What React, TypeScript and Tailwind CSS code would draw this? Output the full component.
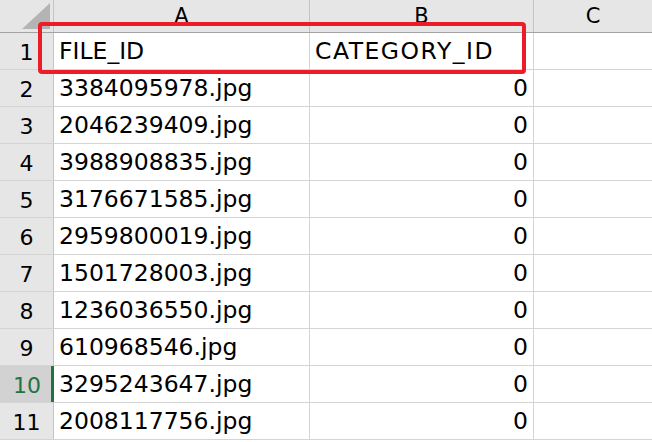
const rows: [string, string][] = [
  ['3384095978.jpg', '0'],
  ['2046239409.jpg', '0'],
  ['3988908835.jpg', '0'],
  ['3176671585.jpg', '0'],
  ['2959800019.jpg', '0'],
  ['1501728003.jpg', '0'],
  ['1236036550.jpg', '0'],
  ['610968546.jpg', '0'],
  ['3295243647.jpg', '0'],
  ['2008117756.jpg', '0'],
];

export default function App() {
  return (
    <div className="relative w-[652px] h-[442px] overflow-hidden bg-white font-['DejaVu_Sans',sans-serif] text-black">
      {/* column headers */}
      <div className="flex h-[33px] bg-[#e6e6e6] border-b border-[#a3a3a3]">
        <div className="relative w-[54px] shrink-0 border-r border-[#c4c4c4]">
          <svg className="absolute left-[22px] top-[3px]" width="28" height="26" viewBox="0 0 28 26">
            <polygon points="28,0 28,26 0,26" fill="#b4b4b4" />
          </svg>
        </div>
        <div className="w-[256px] shrink-0 border-r border-[#c4c4c4] flex items-center justify-center text-[21px] pt-[1px]">A</div>
        <div className="w-[224px] shrink-0 border-r border-[#c4c4c4] flex items-center justify-center text-[21px] pt-[1px]">B</div>
        <div className="flex-1 flex items-center justify-center text-[21px] pt-[1px]">C</div>
      </div>

      {/* row 1 */}
      <div className="flex h-[37px] border-b border-[#d4d4d4]">
        <div className="w-[54px] shrink-0 bg-[#e6e6e6] border-r border-[#c4c4c4] flex items-center justify-center text-[22px] pt-[2px]">1</div>
        <div className="w-[256px] shrink-0 border-r border-[#d4d4d4] flex items-center pl-[5px] text-[23.5px] pt-[2px]">FILE_ID</div>
        <div className="w-[224px] shrink-0 border-r border-[#d4d4d4] flex items-center pl-[5px] text-[23.5px] tracking-[1.5px] pt-[2px]">CATEGORY_ID</div>
        <div className="flex-1" />
      </div>

      {rows.map(([file, cat], i) => {
        const n = i + 2;
        const selected = n === 10;
        return (
          <div key={n} className="flex h-[37px] border-b border-[#d4d4d4]">
            <div
              className={
                selected
                  ? 'w-[54px] shrink-0 bg-[#d2d2d2] border-r-[3px] border-[#217346] flex items-center justify-center pl-[3px] text-[22px] pt-[2px] text-[#217346]'
                  : 'w-[54px] shrink-0 bg-[#e6e6e6] border-r border-[#c4c4c4] flex items-center justify-center text-[22px] pt-[2px]'
              }
            >
              {n}
            </div>
            <div className="w-[256px] shrink-0 border-r border-[#d4d4d4] flex items-center pl-[5px] text-[23.5px] pt-[2px]">{file}</div>
            <div className="w-[224px] shrink-0 border-r border-[#d4d4d4] flex items-center justify-end pr-[5px] text-[23.5px] pt-[2px]">{cat}</div>
            <div className="flex-1" />
          </div>
        );
      })}

      {/* red highlight */}
      <div className="absolute left-[38px] top-[22px] w-[488px] h-[52px] border-4 border-[#ec1c28] rounded-[4px]" />
    </div>
  );
}
